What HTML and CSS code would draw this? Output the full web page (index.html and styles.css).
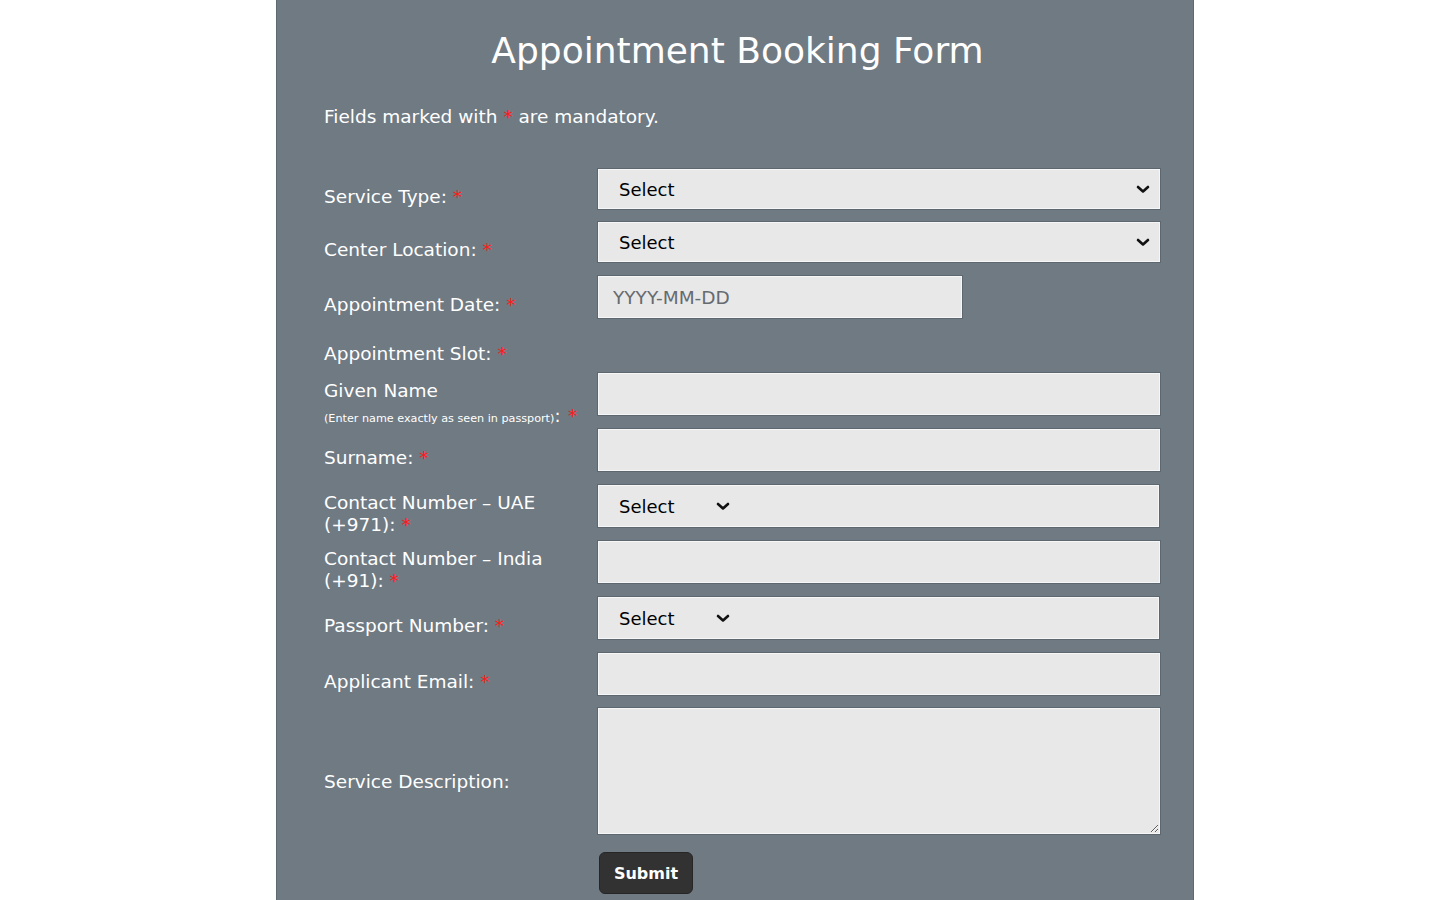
FILE: index.html
```html
<!DOCTYPE html>
<html lang="en">
<head>
<meta charset="utf-8">
<title>Appointment Booking Form</title>
<link rel="stylesheet" href="styles.css">
</head>
<body>
<div class="panel">
  <h1 class="title">Appointment Booking Form</h1>
  <p class="note">Fields marked with <span class="req">*</span> are mandatory.</p>
  <form class="grid">
    <label class="lbl lbl-sel">Service Type: <span class="req">*</span></label>
    <div class="selwrap first">
      <select class="sel">
        <option>Select</option>
        <option>Passport Renewal</option>
        <option>Visa Services</option>
        <option>Attestation</option>
      </select>
      <svg class="chev" viewBox="0 0 14 9" width="14" height="9"><path d="M2 2 L7 6.5 L12 2" fill="none" stroke="#111" stroke-width="2.6" stroke-linecap="round" stroke-linejoin="round"/></svg>
    </div>

    <label class="lbl lbl-sel">Center Location: <span class="req">*</span></label>
    <div class="selwrap">
      <select class="sel">
        <option>Select</option>
        <option>Dubai</option>
        <option>Abu Dhabi</option>
        <option>Sharjah</option>
      </select>
      <svg class="chev" viewBox="0 0 14 9" width="14" height="9"><path d="M2 2 L7 6.5 L12 2" fill="none" stroke="#111" stroke-width="2.6" stroke-linecap="round" stroke-linejoin="round"/></svg>
    </div>

    <label class="lbl">Appointment Date: <span class="req">*</span></label>
    <div><input class="field date" type="text" placeholder="YYYY-MM-DD"></div>

    <label class="lbl lbl-slot">Appointment Slot: <span class="req">*</span></label>
    <div></div>

    <label class="lbl lbl-given">Given Name<span class="hint">(Enter name exactly as seen in passport)<span class="colon">:</span> <span class="req">*</span></span></label>
    <input class="field" type="text">

    <label class="lbl">Surname: <span class="req">*</span></label>
    <input class="field" type="text">

    <label class="lbl lbl-two">Contact Number – UAE<br>(+971): <span class="req">*</span></label>
    <div class="box">
      <div class="mini">
        <select class="minisel">
          <option>Select</option>
          <option>050</option>
          <option>052</option>
          <option>055</option>
        </select>
        <svg class="chev" viewBox="0 0 14 9" width="14" height="9"><path d="M2 2 L7 6.5 L12 2" fill="none" stroke="#111" stroke-width="2.6" stroke-linecap="round" stroke-linejoin="round"/></svg>
      </div>
    </div>

    <label class="lbl lbl-two">Contact Number – India<br>(+91): <span class="req">*</span></label>
    <input class="field" type="text">

    <label class="lbl">Passport Number: <span class="req">*</span></label>
    <div class="box">
      <div class="mini">
        <select class="minisel">
          <option>Select</option>
          <option>Ordinary</option>
          <option>Diplomatic</option>
        </select>
        <svg class="chev" viewBox="0 0 14 9" width="14" height="9"><path d="M2 2 L7 6.5 L12 2" fill="none" stroke="#111" stroke-width="2.6" stroke-linecap="round" stroke-linejoin="round"/></svg>
      </div>
    </div>

    <label class="lbl">Applicant Email: <span class="req">*</span></label>
    <input class="field" type="email">

    <label class="lbl lbl-desc">Service Description:</label>
    <textarea class="field area"></textarea>

    <div></div>
    <div class="actions"><button class="submit" type="button">Submit</button></div>
  </form>
</div>
</body>
</html>
```

FILE: styles.css
```css
html, body {
  margin: 0;
  padding: 0;
  background: #ffffff;
}

body {
  font-family: "DejaVu Sans", Verdana, sans-serif;
  color: #ffffff;
}

.panel {
  box-sizing: border-box;
  width: 918px;
  margin-left: 276px;
  padding: 29px 33px 40px 47px;
  background: #6f7a83;
  border: 1px solid #5f6972;
  border-top: none;
  border-radius: 0 0 5px 5px;
  min-height: 960px;
}

.title {
  margin: 0 0 0 -9px;
  font-size: 36px;
  line-height: 43px;
  font-weight: normal;
  text-align: center;
  color: #ffffff;
}

.note {
  margin: 34px 0 0 0;
  font-size: 18.5px;
  line-height: 22px;
}

.req {
  color: #ff1a1a;
}

.grid {
  margin-top: 41px;
  display: grid;
  grid-template-columns: 274px 562px;
  row-gap: 14px;
  align-items: start;
}

.lbl {
  font-size: 18.5px;
  line-height: 22px;
  margin-top: 18px;
  margin-bottom: -20px;
}

.lbl-sel {
  margin-top: 17px;
}

.lbl-slot {
  margin-top: 11px;
  margin-bottom: -6px;
}

.lbl-two {
  margin-top: 7px;
}

.lbl-given {
  margin-top: 7px;
}

.lbl-desc {
  margin-top: 62px;
}

.hint {
  display: block;
  font-size: 11.2px;
  line-height: 27px;
}

.hint .colon {
  font-size: 18px;
}

.hint .req {
  font-size: 18.5px;
  margin-left: 4px;
}

.selwrap,
.mini {
  position: relative;
}

.selwrap.first {
  margin-bottom: -1px;
}

.sel,
.field,
.box {
  box-sizing: border-box;
  display: block;
  width: 562px;
  margin: 0;
  background: #e8e8e8;
  border: 1px solid #f6f6f6;
  box-shadow: 0 0 0 1px #5d676f;
  border-radius: 0;
  font-family: "DejaVu Sans", Verdana, sans-serif;
  font-size: 18.5px;
  color: #000000;
  outline: none;
}

.sel {
  height: 40px;
  padding: 0 30px 0 20px;
  font-size: 18px;
  appearance: none;
  -webkit-appearance: none;
}

.chev {
  position: absolute;
  right: 10px;
  top: 16px;
  pointer-events: none;
}

.field {
  height: 42px;
  padding: 0 14px;
}

.field::placeholder {
  color: #666b70;
}

.date {
  width: 364px;
}

.box {
  height: 42px;
  padding: 0;
  width: 561px;
}

.mini {
  width: 140px;
}

.minisel {
  box-sizing: border-box;
  width: 140px;
  height: 40px;
  padding: 0 0 0 20px;
  border: none;
  background: transparent;
  appearance: none;
  -webkit-appearance: none;
  font-family: "DejaVu Sans", Verdana, sans-serif;
  font-size: 18px;
  color: #000000;
  outline: none;
}

.mini .chev {
  right: auto;
  left: 117px;
  top: 16px;
}

.area {
  height: 126px;
  margin-top: -1px;
  padding: 10px 14px;
  resize: both;
}

.actions {
  padding-top: 4px;
}

.submit {
  box-sizing: border-box;
  width: 94px;
  height: 42px;
  margin-left: 1px;
  background: #323232;
  color: #ffffff;
  border: 1px solid #262626;
  border-radius: 6px;
  font-family: "DejaVu Sans", Verdana, sans-serif;
  font-weight: bold;
  font-size: 16px;
  cursor: pointer;
}
```
